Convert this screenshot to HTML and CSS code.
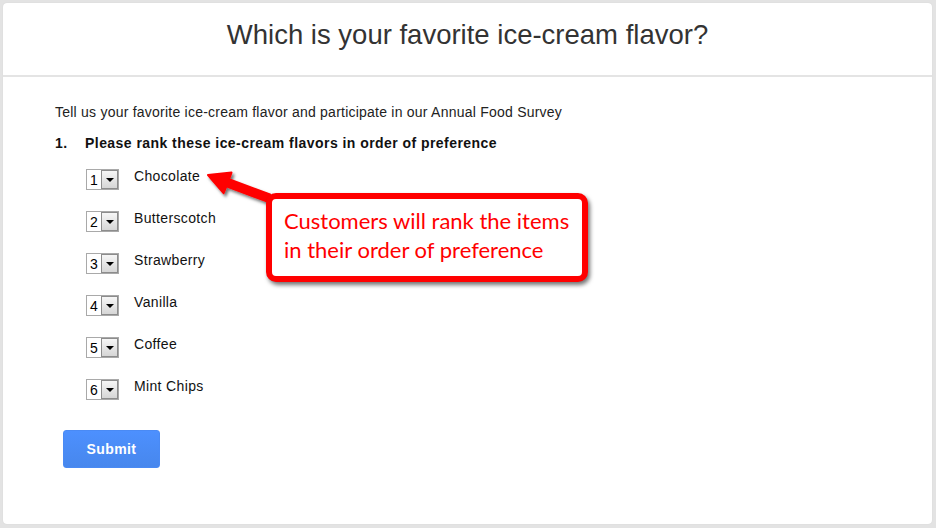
FILE: index.html
```html
<!DOCTYPE html>
<html lang="en">
<head>
<meta charset="utf-8">
<title>Which is your favorite ice-cream flavor?</title>
<link rel="stylesheet" href="styles.css">
</head>
<body>
<div class="card">
  <header class="card-head">
    <h1 class="title">Which is your favorite ice-cream flavor?</h1>
  </header>
  <main class="card-body">
    <p class="intro">Tell us your favorite ice-cream flavor and participate in our Annual Food Survey</p>
    <p class="question"><span class="qnum">1.</span>Please rank these ice-cream flavors in order of preference</p>
    <ul class="options">
      <li class="option"><span class="rank"><span class="rank-val">1</span><span class="rank-btn"><span class="tri"></span></span></span><span class="label">Chocolate</span></li>
      <li class="option"><span class="rank"><span class="rank-val">2</span><span class="rank-btn"><span class="tri"></span></span></span><span class="label">Butterscotch</span></li>
      <li class="option"><span class="rank"><span class="rank-val">3</span><span class="rank-btn"><span class="tri"></span></span></span><span class="label">Strawberry</span></li>
      <li class="option"><span class="rank"><span class="rank-val">4</span><span class="rank-btn"><span class="tri"></span></span></span><span class="label">Vanilla</span></li>
      <li class="option"><span class="rank"><span class="rank-val">5</span><span class="rank-btn"><span class="tri"></span></span></span><span class="label">Coffee</span></li>
      <li class="option"><span class="rank"><span class="rank-val">6</span><span class="rank-btn"><span class="tri"></span></span></span><span class="label">Mint Chips</span></li>
    </ul>
    <button class="submit" type="button">Submit</button>
  </main>
</div>

<svg class="arrow" width="936" height="528" viewBox="0 0 936 528" aria-hidden="true">
  <defs>
    <filter id="shadow" x="-20%" y="-20%" width="140%" height="160%">
      <feDropShadow dx="2" dy="2.5" stdDeviation="1.6" flood-color="#000" flood-opacity="0.55"/>
    </filter>
  </defs>
  <polygon filter="url(#shadow)" fill="#ff0000" stroke="#ff0000" stroke-width="2" stroke-linejoin="round"
    points="208,175 231.5,172.6 229,179.3 270,194.5 267.4,201.6 226.4,186.3 223.6,193.2"/>
</svg>

<div class="callout">Customers will rank the items<br>in their order of preference</div>
</body>
</html>
```
FILE: styles.css
```css
* { box-sizing: border-box; }

html, body {
  margin: 0;
  padding: 0;
}

body {
  width: 936px;
  height: 528px;
  background: #e3e3e3;
  font-family: "Liberation Sans", Arial, sans-serif;
  color: #222;
  position: relative;
  overflow: hidden;
  padding: 3px 4px 4px 3px;
}

.card {
  height: 521px;
  background: #fff;
  border-radius: 4px;
  box-shadow: 0 0 1px #c8c8c8;
}

.card-head {
  padding: 16px 0 24px;
  border-bottom: 2px solid #e4e4e4;
  text-align: center;
}

.title {
  margin: 0;
  font-size: 27.5px;
  line-height: 32px;
  font-weight: normal;
  color: #333;
}

.card-body {
  padding: 27px 52px 0;
}

.intro {
  margin: 0;
  font-size: 14px;
  line-height: 16px;
  letter-spacing: 0.23px;
  color: #222;
}

.question {
  margin: 15px 0 0;
  font-size: 14px;
  line-height: 16px;
  font-weight: bold;
  letter-spacing: 0.45px;
  color: #111;
  display: flex;
}

.qnum {
  width: 30px;
}

.options {
  list-style: none;
  margin: 17px 0 0;
  padding: 0 0 0 31px;
}

.option {
  height: 42px;
  display: flex;
  align-items: flex-start;
  gap: 15px;
}

.rank {
  margin-top: 1px;
  width: 33px;
  height: 21px;
  border: 1px solid #a9a9a9;
  background: #fff;
  display: flex;
}

.rank-val {
  width: 14px;
  padding: 2px 0 0 3px;
  font-size: 14px;
  line-height: 16px;
  color: #000;
}

.rank-btn {
  flex: 1;
  border: 1px solid #8c8c8c;
  background: linear-gradient(#f6f6f6, #d6d6d6);
  display: flex;
  align-items: center;
  justify-content: center;
}

.tri {
  width: 0;
  height: 0;
  border-left: 4px solid transparent;
  border-right: 4px solid transparent;
  border-top: 4px solid #000;
  margin-top: 1px;
}

.label {
  font-size: 14px;
  line-height: 16px;
  letter-spacing: 0.35px;
  color: #111;
}

.submit {
  display: block;
  margin: 10px 0 0 8px;
  width: 97px;
  height: 38px;
  border: 1px solid #4a8af4;
  border-radius: 3px;
  background: linear-gradient(#4d90fe, #4787ed);
  color: #fff;
  font-family: "Liberation Sans", Arial, sans-serif;
  font-size: 14px;
  font-weight: bold;
  letter-spacing: 0.4px;
  padding: 0;
}

.arrow {
  position: absolute;
  left: 0;
  top: 0;
  pointer-events: none;
}

.callout {
  position: absolute;
  left: 266px;
  top: 193px;
  width: 322px;
  height: 89px;
  border: 6px solid #ff0000;
  border-radius: 10px;
  background: #fff;
  box-shadow: 2px 3px 4px rgba(0, 0, 0, 0.55);
  padding: 7px 0 0 12px;
  font-family: Lato, "Open Sans", sans-serif;
  font-size: 22px;
  line-height: 29px;
  color: #ff0000;
  white-space: nowrap;
}
```
